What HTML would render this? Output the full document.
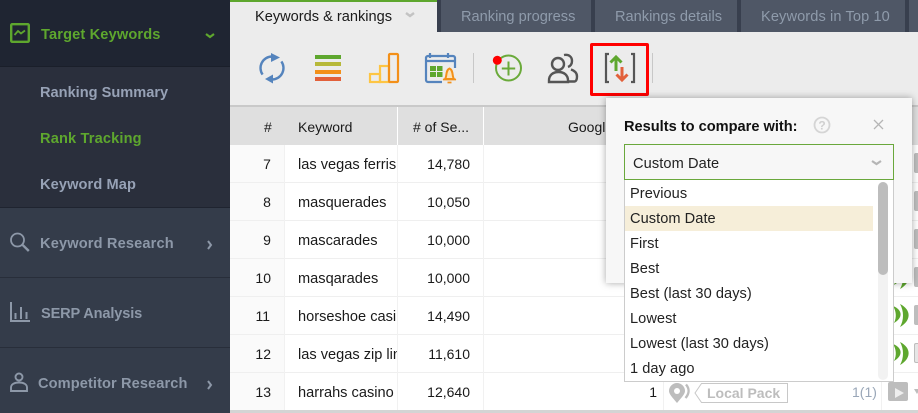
<!DOCTYPE html>
<html><head><meta charset="utf-8"><style>
*{box-sizing:border-box}
html,body{margin:0;padding:0;width:918px;height:413px;overflow:hidden;background:#fff;font-family:"Liberation Sans",sans-serif}
.a{position:absolute;white-space:nowrap}
svg{position:absolute;overflow:visible}
.nav{font-size:14.6px;font-weight:bold;line-height:16px;margin-top:1px}
.tab{position:absolute;top:0;height:32px;background:#4f5766;color:#8f9bab;font-size:14.6px;line-height:34px;padding-left:20px;white-space:nowrap}
.c{position:absolute;font-size:14px;line-height:16px;color:#1a1a1a;white-space:nowrap;overflow:hidden}
.k{font-size:14.6px;margin-top:1px}
.o{position:absolute;left:0;width:248px;height:25px;font-size:14.6px;line-height:25px;padding-left:5px;padding-top:1px;color:#222;letter-spacing:.05px}
.hl{position:absolute;height:1px;left:230px;width:688px;background:#efefef}
.vl{position:absolute;width:1px;top:145px;height:265px;background:#f1f1f1}
.g{position:absolute;left:914px;width:4px;height:20px;background:#bdbdbd;border-radius:2px 0 0 2px}
</style></head><body>
<div class="a" style="left:0;top:0;width:230px;height:413px;background:#343c4a"></div>
<div class="a" style="left:0;top:0;width:230px;height:67px;background:#1f2532"></div>
<div class="a" style="left:0;top:67px;width:230px;height:141px;background:#2a2f3c"></div>
<div class="a" style="left:0;top:66px;width:230px;height:1px;background:#1a1f2a"></div>
<div class="a" style="left:0;top:207px;width:230px;height:1px;background:#1f2430"></div>
<div class="a" style="left:0;top:277px;width:230px;height:1px;background:#282e3a"></div>
<div class="a" style="left:0;top:347px;width:230px;height:1px;background:#282e3a"></div>

<svg style="left:10px;top:23px" width="20" height="20" viewBox="0 0 20 20"><rect x="1.200" y="1.200" width="17.600" height="17.600" rx="1" fill="none" stroke="#5ea72e" stroke-width="2.400"/><path d="M4.500 12l3.500-4 3 2.500 4-3" fill="none" stroke="#5ea72e" stroke-width="1.800"/></svg>
<div class="a nav" style="left:41px;top:26px;color:#5ea72e;letter-spacing:.15px">Target Keywords</div>
<svg style="left:205px;top:33px" width="10" height="6" viewBox="0 0 10 6"><path d="M1 1l4 3 4-3" fill="none" stroke="#5ea72e" stroke-width="2.200"/></svg>
<div class="a nav" style="left:40px;top:84px;color:#97a2b6">Ranking Summary</div>
<div class="a nav" style="left:40px;top:130px;color:#5ea72e;letter-spacing:.15px">Rank Tracking</div>
<div class="a nav" style="left:40px;top:176px;color:#97a2b6;letter-spacing:.1px">Keyword Map</div>

<svg style="left:10px;top:232px" width="20" height="20" viewBox="0 0 20 20"><circle cx="7.500" cy="8" r="6.500" fill="none" stroke="#8d98a8" stroke-width="1.800"/><path d="M12.500 12.800l6.300 6.200" stroke="#8d98a8" stroke-width="2.400"/></svg>
<div class="a nav" style="left:40px;top:235px;color:#8d98a8;letter-spacing:.15px">Keyword Research</div>
<svg style="left:207px;top:240px" width="6" height="10" viewBox="0 0 6 10"><path d="M1 1l3 4-3 4" fill="none" stroke="#8d98a8" stroke-width="2"/></svg>
<svg style="left:10px;top:302px" width="20" height="20" viewBox="0 0 20 20"><path d="M1 0v19h19" fill="none" stroke="#8d98a8" stroke-width="2"/><path d="M5.500 11v6M11 5v12M16.500 10v7" stroke="#8d98a8" stroke-width="2"/></svg>
<div class="a nav" style="left:41px;top:305px;color:#8d98a8;letter-spacing:-.15px">SERP Analysis</div>
<svg style="left:10px;top:372px" width="18" height="20" viewBox="0 0 18 20"><circle cx="9" cy="5" r="3.500" fill="none" stroke="#8d98a8" stroke-width="1.900"/><path d="M1 19v-3.500c0-3 3-5 8-5s8 2 8 5V19z" fill="none" stroke="#8d98a8" stroke-width="1.900"/></svg>
<div class="a nav" style="left:38px;top:375px;color:#8d98a8;letter-spacing:.1px">Competitor Research</div>
<svg style="left:207px;top:380px" width="6" height="10" viewBox="0 0 6 10"><path d="M1 1l3 4-3 4" fill="none" stroke="#8d98a8" stroke-width="2"/></svg>

<div class="a" style="left:230px;top:0;width:688px;height:32px;background:#383f4e"></div>
<div class="a" style="left:230px;top:0;width:207px;height:32px;background:#ececec"></div>
<div class="a" style="left:230px;top:0;width:207px;height:2px;background:#5ea72e"></div>
<div class="a" style="left:255px;top:9px;font-size:14.6px;line-height:16px;color:#1a1a1a">Keywords &amp; rankings</div>
<svg style="left:405px;top:12px" width="10" height="6" viewBox="0 0 10 6"><path d="M1 1l4 3 4-3" fill="none" stroke="#c3c3c3" stroke-width="2.400"/></svg>
<div class="tab" style="left:441px;width:150px">Ranking progress</div>
<div class="tab" style="left:595px;width:142px">Rankings details</div>
<div class="tab" style="left:741px;width:164px;letter-spacing:.1px">Keywords in Top 10</div>
<div class="tab" style="left:909px;width:9px;padding:0"></div>

<div class="a" style="left:230px;top:32px;width:688px;height:73px;background:#ececec"></div>
<div class="a" style="left:230px;top:105px;width:688px;height:2px;background:#c9c9c9"></div>

<svg style="left:258px;top:53px" width="28" height="30" viewBox="0 0 28 30"><path d="M4.600 21.600A11.500 11.500 0 0 1 14 3.500M23.400 8.400A11.500 11.500 0 0 1 14 26.500" fill="none" stroke="#5584bd" stroke-width="2.400"/><path d="M13 0l9 4.500-9 4.500zM15 21.500l-8 4.500 8 4.500z" fill="#5584bd"/></svg>
<div class="a" style="left:315px;top:55px;width:26px;height:4px;background:#5ea72e"></div>
<div class="a" style="left:315px;top:62px;width:26px;height:4px;background:#b7b93a"></div>
<div class="a" style="left:315px;top:70px;width:26px;height:4px;background:#f39019"></div>
<div class="a" style="left:315px;top:77px;width:26px;height:4px;background:#e2603a"></div>
<svg style="left:369px;top:53px" width="30" height="30" viewBox="0 0 30 30"><rect x="1" y="21" width="10" height="8" fill="none" stroke="#fdc544" stroke-width="2.200"/><rect x="11" y="13" width="9" height="16" fill="none" stroke="#fdc544" stroke-width="2.200"/><rect x="20" y="1" width="9" height="28" rx="1" fill="none" stroke="#f39019" stroke-width="2.200"/></svg>
<svg style="left:425px;top:53px" width="31" height="31" viewBox="0 0 31 31"><path d="M17 29H3a2 2 0 0 1-2-2V5a2 2 0 0 1 2-2h25a2 2 0 0 1 2 2v10M1 8h29M5 0v5M23 0v5" fill="none" stroke="#5584bd" stroke-width="2.200"/><path d="M5 13h6v5H5zM12 13h5.500v5H12zM5 19h6v5H5zM12 19h5.500v5H12z" fill="#5ea72e"/><path d="M20 26c2-2 .5-9 4.500-10.500 4 1.500 2.500 8.500 4.500 10.500z" fill="#fde3b8" stroke="#f39019" stroke-width="2"/><path d="M18 26.500h13M22.500 29.500h4" stroke="#f39019" stroke-width="1.800"/></svg>
<div class="a" style="left:473px;top:53px;width:1px;height:30px;background:#c8c8c8"></div>
<svg style="left:492px;top:53px" width="32" height="30" viewBox="0 0 32 30"><circle cx="16.500" cy="15" r="12.500" fill="none" stroke="#6aaa3a" stroke-width="2"/><path d="M16.500 8.500v14M9.800 15.500h13.400" stroke="#6aaa3a" stroke-width="2"/><circle cx="5.300" cy="7.300" r="4.500" fill="#f00"/></svg>
<svg style="left:547px;top:53px" width="32" height="30" viewBox="0 0 32 30"><circle cx="11" cy="11" r="6" fill="none" stroke="#555" stroke-width="2.400"/><path d="M2 29v-1.500c0-5.500 4-8.500 9.500-8.500s9.500 3 9.500 8.500V29zM17 2c5-1 8 2 8 6 0 3-1.500 5-4 6M24 16.500c3 1 6 3 6 7 0 3-1 5-2.500 5h-6" fill="none" stroke="#555" stroke-width="2.400"/></svg>
<div class="a" style="left:590px;top:43px;width:59px;height:53px;border:3px solid #f00;border-radius:2px"></div>
<svg style="left:603px;top:52px" width="32" height="31" viewBox="0 0 32 31"><path d="M6 2H3v28h3M28 2h3v28h-3" fill="none" stroke="#555" stroke-width="2.200"/><path d="M13 19V5M7.500 10.500L13 5l5.500 5.500" fill="none" stroke="#5ea72e" stroke-width="3"/><path d="M19 15v13M13.500 22.500L19 28l5.500-5.500" fill="none" stroke="#e2603a" stroke-width="3"/></svg>
<div class="a" style="left:652px;top:53px;width:1px;height:30px;background:#c8c8c8"></div>

<div class="a" style="left:230px;top:107px;width:688px;height:38px;background:#dfdfdf"></div>
<div class="a" style="left:397px;top:107px;width:1px;height:38px;background:#fff"></div>
<div class="a" style="left:483px;top:107px;width:1px;height:38px;background:#fff"></div>
<div class="c" style="left:264px;top:119px">#</div>
<div class="c" style="left:298px;top:119px">Keyword</div>
<div class="c" style="left:413px;top:119px">#&nbsp;of Se...</div>
<div class="c" style="left:568px;top:119px">Google</div>
<div class="a" style="left:230px;top:145px;width:54px;height:265px;background:#fafafa"></div>
<div class="hl" style="top:182px"></div><div class="hl" style="top:220px"></div><div class="hl" style="top:258px"></div><div class="hl" style="top:296px"></div><div class="hl" style="top:334px"></div><div class="hl" style="top:372px"></div>
<div class="a" style="left:230px;top:410px;width:688px;height:3px;background:#d4d4d4"></div>
<div class="vl" style="left:284px"></div><div class="vl" style="left:397px"></div><div class="vl" style="left:483px"></div><div class="vl" style="left:663px;top:372px;height:38px"></div><div class="vl" style="left:881px"></div>

<div class="c" style="left:230px;width:74px;top:156px;text-align:center">7</div>
<div class="c" style="left:230px;width:74px;top:194px;text-align:center">8</div>
<div class="c" style="left:230px;width:74px;top:232px;text-align:center">9</div>
<div class="c" style="left:230px;top:270px;text-align:right;width:41px">10</div>
<div class="c" style="left:230px;top:308px;text-align:right;width:40px">11</div>
<div class="c" style="left:230px;top:346px;text-align:right;width:41px">12</div>
<div class="c" style="left:230px;top:384px;text-align:right;width:41px">13</div>

<div class="c k" style="left:298px;width:99px;top:156px">las vegas ferris wheel</div>
<div class="c k" style="left:298px;width:99px;top:194px">masquerades</div>
<div class="c k" style="left:298px;width:99px;top:232px">mascarades</div>
<div class="c k" style="left:298px;width:99px;top:270px">masqarades</div>
<div class="c k" style="left:298px;width:99px;top:308px">horseshoe casino</div>
<div class="c k" style="left:298px;width:99px;top:346px">las vegas zip line</div>
<div class="c k" style="left:298px;width:99px;top:384px">harrahs casino</div>

<div class="c" style="left:400px;width:70px;top:156px;text-align:right">14,780</div>
<div class="c" style="left:400px;width:70px;top:194px;text-align:right">10,050</div>
<div class="c" style="left:400px;width:70px;top:232px;text-align:right">10,000</div>
<div class="c" style="left:400px;width:70px;top:270px;text-align:right">10,000</div>
<div class="c" style="left:400px;width:70px;top:308px;text-align:right">14,490</div>
<div class="c" style="left:400px;width:70px;top:346px;text-align:right">11,610</div>
<div class="c" style="left:400px;width:70px;top:384px;text-align:right">12,640</div>

<div class="c" style="left:640px;width:17px;top:384px;text-align:right">1</div>
<svg style="left:669px;top:383px" width="21" height="21" viewBox="0 0 21 21"><path d="M8 20C3 14 0 11 0 8a8 8 0 0 1 16 0c0 3-3 6-8 12z" fill="#bdbdbd"/><circle cx="8" cy="8" r="3" fill="#fff"/><path d="M17 1.500c3.500 4 3.500 9-.5 13.500" fill="none" stroke="#bdbdbd" stroke-width="2.400"/></svg>
<svg style="left:694px;top:383px" width="95" height="20" viewBox="0 0 95 20"><path d="M93.500.5H7.500L1 10l6.500 9.500h86z" fill="#fff" stroke="#c8c8c8" stroke-width="1"/></svg>
<div class="a" style="left:707px;top:386px;font-size:14px;font-weight:bold;line-height:15px;color:#bdbdbd">Local Pack</div>
<div class="c" style="left:852px;top:384px;color:#9aa7b8">1(1)</div>
<div class="a" style="left:888px;top:382px;width:20px;height:19px;background:#bdbdbd;border-radius:2px"></div>
<svg style="left:895px;top:388px" width="9" height="10" viewBox="0 0 9 10"><path d="M0 0l9 5-9 5z" fill="#eee"/></svg>
<svg style="left:914px;top:389px" width="4" height="5" viewBox="0 0 4 5"><path d="M0 0h6L3 5z" fill="#bdbdbd"/></svg>

<svg style="left:891px;top:265px" width="20" height="26" viewBox="0 0 20 26"><path d="M2 3C12 7 12 15 3 20C6 14 5 8 2 3zM9 1C21 7 20 18 9 24C13 17 13 8 9 1z" fill="#5ea72e"/></svg>
<svg style="left:891px;top:303px" width="20" height="26" viewBox="0 0 20 26"><path d="M2 3C12 7 12 15 3 20C6 14 5 8 2 3zM9 1C21 7 20 18 9 24C13 17 13 8 9 1z" fill="#5ea72e"/></svg>
<svg style="left:891px;top:341px" width="20" height="26" viewBox="0 0 20 26"><path d="M2 3C12 7 12 15 3 20C6 14 5 8 2 3zM9 1C21 7 20 18 9 24C13 17 13 8 9 1z" fill="#5ea72e"/></svg>
<div class="g" style="top:153px"></div>
<div class="g" style="top:191px"></div>
<div class="g" style="top:229px"></div>
<div class="g" style="top:267px"></div>
<div class="g" style="top:305px"></div>
<div class="g" style="top:343px;background:#e6e6e6;border:1px solid #bdbdbd;border-right:0"></div>

<div class="a" style="left:606px;top:98px;width:306px;height:185px;background:#f7f7f7;box-shadow:0 0 7px rgba(0,0,0,.35)"></div>
<div class="c" style="left:624px;top:119px;font-size:14.6px;font-weight:bold;color:#111">Results to compare with:</div>
<svg style="left:813px;top:116px" width="18" height="18" viewBox="0 0 18 18"><circle cx="9" cy="9" r="7.500" fill="none" stroke="#d5d5d5" stroke-width="1.800"/><text x="9" y="13.500" font-family="Liberation Sans" font-size="12" font-weight="bold" fill="#d0d0d0" text-anchor="middle">?</text></svg>
<svg style="left:873px;top:119px" width="11" height="11" viewBox="0 0 11 11"><path d="M1 1l9 9M10 1l-9 9" stroke="#b5b5b5" stroke-width="1.300"/></svg>
<div class="a" style="left:624px;top:144px;width:270px;height:36px;background:#f7f7f7;border:1px solid #6aa83c"></div>
<div class="c" style="left:633px;top:156px;font-size:14.6px;color:#222;letter-spacing:.1px">Custom Date</div>
<svg style="left:871px;top:160px" width="11" height="6" viewBox="0 0 11 6"><path d="M1 1l4.500 3L10 1" fill="none" stroke="#b5b5b5" stroke-width="2.200"/></svg>

<div class="a" style="left:624px;top:180px;width:270px;height:202px;background:#fff;border:1px solid #ccc;border-top:0">
<div class="a" style="left:253px;top:2px;width:10px;height:198px;background:#f2f2f2;border-radius:5px"></div>
<div class="a" style="left:253px;top:2px;width:10px;height:93px;background:#bdbdbd;border-radius:5px"></div>
<div class="o" style="top:1px">Previous</div>
<div class="o" style="top:26px;background:#f6eed9">Custom Date</div>
<div class="o" style="top:51px">First</div>
<div class="o" style="top:76px">Best</div>
<div class="o" style="top:101px">Best (last 30 days)</div>
<div class="o" style="top:126px">Lowest</div>
<div class="o" style="top:151px">Lowest (last 30 days)</div>
<div class="o" style="top:176px">1 day ago</div>
</div>
</body></html>
